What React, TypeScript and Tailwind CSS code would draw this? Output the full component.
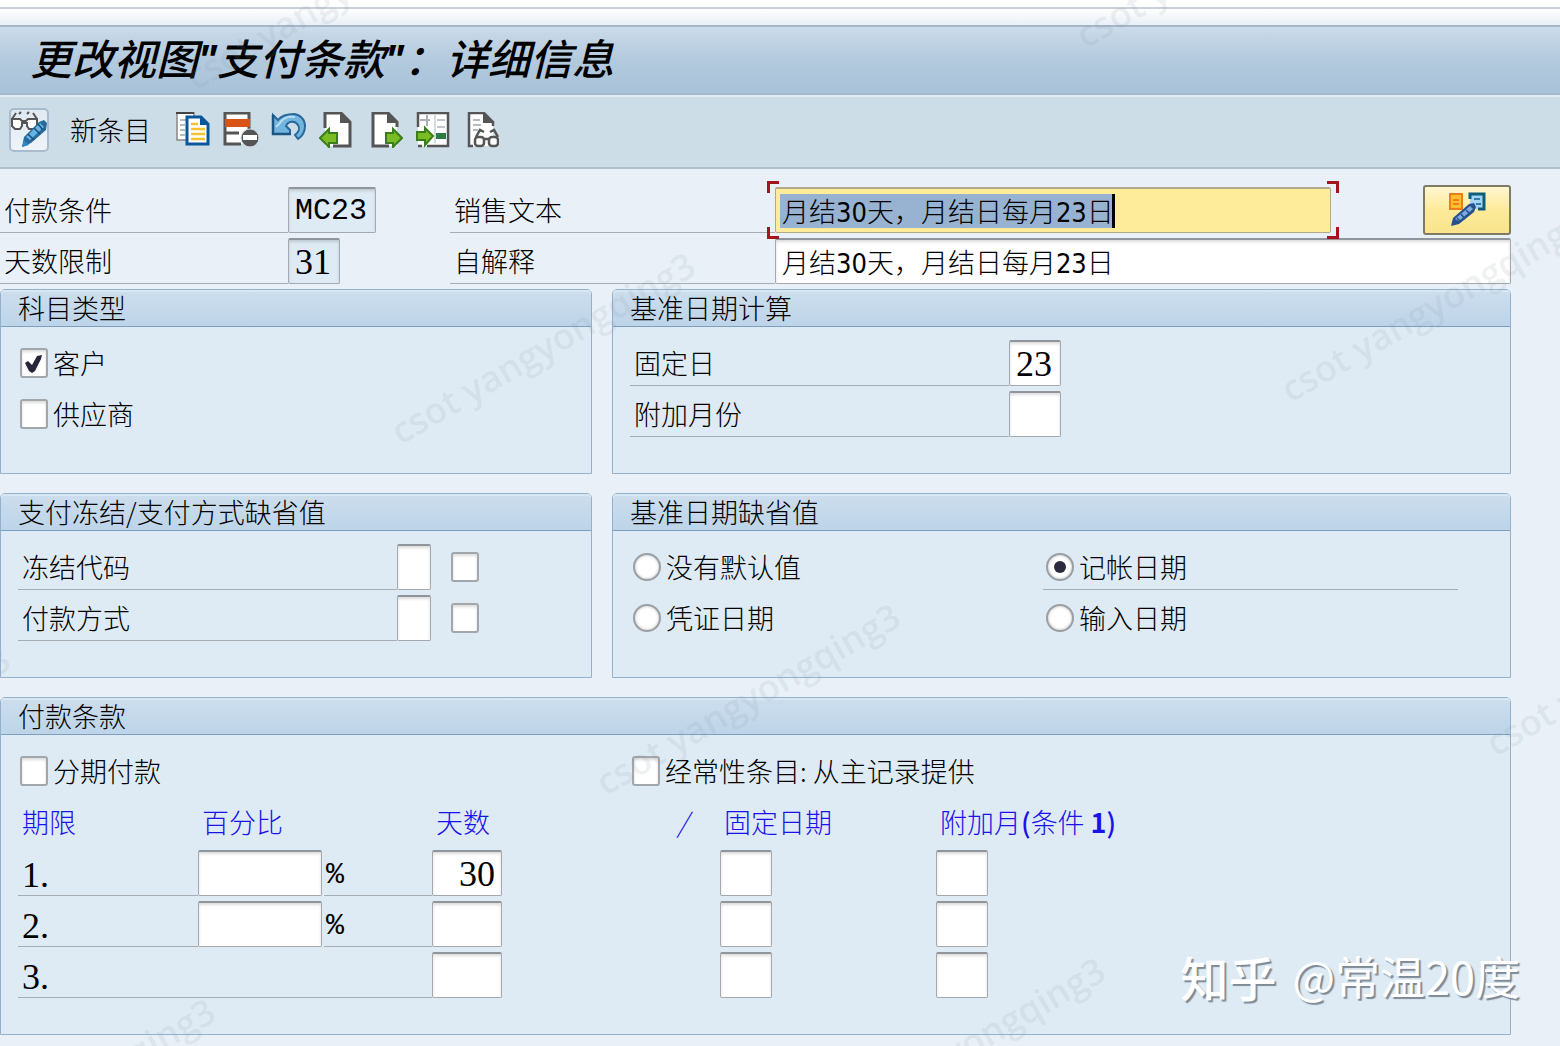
import React, { useState } from "react";

const MIXED = "font-['DejaVu_Sans_Condensed','Noto_Sans_CJK_SC',sans-serif]";
const CJK = "font-['Noto_Sans_CJK_SC',sans-serif]";

const FIELD =
  "block h-[46px] rounded-[2px] border border-[#a3a9ae] border-t-2 border-t-[#8f959b] bg-white text-black outline-none shadow-[inset_0_2px_3px_rgba(0,0,0,0.14)]";
const DIGITS = "font-['Liberation_Serif',serif] text-[36px] leading-[40px]";
const LABEL = "flex h-[46px] items-center border-b border-[#a6adb3] pl-1";

function CheckBox({ label, checked = false, text }: { label: string; checked?: boolean; text?: boolean }) {
  const [on, setOn] = useState(checked);
  return (
    <label className={text ? "flex h-[46px] items-center gap-[5px] pl-0.5" : "flex h-[46px] items-center"}>
      <span className="relative block h-[30px] w-7 shrink-0">
        <input
          type="checkbox"
          aria-label={label}
          checked={on}
          onChange={() => setOn(!on)}
          className="block h-[30px] w-7 appearance-none rounded-[3px] border-2 border-[#a2a7ac] bg-white shadow-[inset_0_2px_3px_rgba(0,0,0,0.14)]"
        />
        {on && (
          <svg viewBox="0 0 28 30" className="pointer-events-none absolute inset-0">
            <path d="M5 15l3-2 4 4L17 8l5-1-1 4-6 12-3 2-3-2z" fill="#26243a" />
          </svg>
        )}
      </span>
      {text && <span>{label}</span>}
    </label>
  );
}

function Radio({ label, value, current, onPick }: { label: string; value: string; current: string; onPick: (v: string) => void }) {
  return (
    <label className="flex h-[46px] items-center gap-[5px] pl-[3px]">
      <span className="relative block size-7 shrink-0">
        <input
          type="radio"
          name="baseline"
          checked={current === value}
          onChange={() => onPick(value)}
          className="block size-7 appearance-none rounded-full border-2 border-[#9a9fa4] bg-white shadow-[inset_0_0_3px_rgba(0,0,0,0.3)]"
        />
        {current === value && <span className="pointer-events-none absolute inset-2 rounded-full bg-[#2b2a40]" />}
      </span>
      <span>{label}</span>
    </label>
  );
}

function Panel({ title, children }: { title: string; children: React.ReactNode }) {
  return (
    <section className="rounded-t-[5px] border border-[#93b1cd] bg-[#deebf4]">
      <h2 className="flex h-[37px] items-center rounded-t-[4px] border-b border-[#7d9fbe] bg-linear-to-b from-[#cddeed] to-[#bdd4e9] pl-[17px] shadow-[inset_0_2px_0_#d9e7f3]">
        {title}
      </h2>
      <div className="flex flex-col gap-[5px] px-[17px] pt-[13px] pb-9">{children}</div>
    </section>
  );
}

const ICON = "size-9 shrink-0";

const DisplayChangeIcon = () => (
  <svg viewBox="0 0 36 40" className="h-10 w-9">
    <path d="M1 9h8l2 2h4l2-2h9v7l-3 3h-5l-2-3v-3h-5v3l-2 3H4l-3-3z" fill="#fff" stroke="#555" strokeWidth="2" />
    <path d="M1 9l4-6M26 9l-4-6M8 4l2-2M16 4l2-2" stroke="#555" strokeWidth="2" fill="none" />
    <path d="M11 37l2-10 15-15 5-2 3 3-1 7-15 13z" fill="#286a9b" />
    <path d="M15 27L29 13l4 4-14 13z" fill="#62b5e6" />
    <path d="M17 24l6 6M23 18l6 6M27 14l5 6" stroke="#1e4d75" strokeWidth="1.5" />
    <path d="M11 37l2-7 5 5z" fill="#2f86c4" />
  </svg>
);

const CopyIcon = () => (
  <svg viewBox="0 0 36 36" className={ICON}>
    <path d="M2 1h17v27H2z" fill="#fff" stroke="#888" strokeWidth="1.5" />
    <path d="M1 1h18" stroke="#444" strokeWidth="2" />
    <path d="M5 8h6M5 13h5M5 18h5M5 23h5" stroke="#b5bbc2" strokeWidth="2" />
    <path d="M12 5h14l7 7v20H12z" fill="#fff" stroke="#0a569b" strokeWidth="3" />
    <path d="M25 4l9 9h-9z" fill="#0a569b" />
    <path d="M16 12h7M16 17h14M16 22h14M16 27h14" stroke="#f5c231" strokeWidth="2.5" />
  </svg>
);

const DeleteIcon = () => (
  <svg viewBox="0 0 36 36" className={ICON}>
    <path d="M1 1h26v31H1z" fill="#fff" />
    <path d="M26 18V1H2v31h16" fill="none" stroke="#555" strokeWidth="3" />
    <path d="M2 7h25v8H2z" fill="#d95319" />
    <path d="M2 21h14" stroke="#555" strokeWidth="3" />
    <circle cx="27" cy="26" r="9" fill="#555" stroke="#cddde8" strokeWidth="1" />
    <path d="M20 23h14v5H20z" fill="#fff" />
  </svg>
);

const UndoIcon = () => (
  <svg viewBox="0 0 36 36" className={ICON}>
    <path
      d="M2 3l5 5C11 3 17 2 23 2c7 1 11 6 11 12 0 7-4 11-7 13l-3-4c4-3 5-7 3-10-3-5-10-4-12 1l4 4v4H2z"
      fill="#72b5df"
      stroke="#27679a"
      strokeWidth="2"
    />
    <path d="M5 15l4-4c3-5 9-7 15-6" stroke="#b9def4" strokeWidth="2" fill="none" />
    <path d="M2 3v19h18" stroke="#1d5583" strokeWidth="2.5" fill="none" />
  </svg>
);

const Arrow = ({ d }: { d: string }) => <path d={d} fill="#79bd22" stroke="#3b7d1b" strokeWidth="2" />;

const PreviousIcon = () => (
  <svg viewBox="0 0 36 36" className={ICON}>
    <path d="M6 1h16l9 9v24H6z" fill="#fff" />
    <path d="M6 16V1h16l9 9v24H14" fill="none" stroke="#555" strokeWidth="3" />
    <path d="M21 1v10h10z" fill="#555" />
    <Arrow d="M1 26l9-9v4h8v10h-8v4z" />
  </svg>
);

const NextIcon = () => (
  <svg viewBox="0 0 36 36" className={ICON}>
    <path d="M6 1h15l9 9v24H6z" fill="#fff" />
    <path d="M30 15v-5l-9-9H6v33h16" fill="none" stroke="#555" strokeWidth="3" />
    <path d="M20 1v10h10z" fill="#555" />
    <Arrow d="M35 26l-9-9v4h-7v10h7v4z" />
  </svg>
);

const PositionIcon = () => (
  <svg viewBox="0 0 36 36" className={ICON}>
    <path d="M3 1h30v33H3z" fill="#fff" />
    <path d="M3 15V1h30v33H12M3 34h4" fill="none" stroke="#555" strokeWidth="2.5" />
    <path d="M12 3v11M5 8h10" stroke="#aab1b8" strokeWidth="2" />
    <path d="M20 3v28" stroke="#d5dadf" strokeWidth="2" />
    <path d="M22 8h8M22 15h8" stroke="#c0c6cc" strokeWidth="2" />
    <path d="M21 21h10v6H21z" fill="#2b7d46" />
    <Arrow d="M18 24l-8-8v4H2v8h8v5z" />
  </svg>
);

const OtherViewIcon = () => (
  <svg viewBox="0 0 36 36" className={ICON}>
    <path d="M6 1h15l9 9v24H6z" fill="#fff" />
    <path d="M30 14v-4l-9-9H6v33h4" fill="none" stroke="#555" strokeWidth="2.5" />
    <path d="M20 1v10h10z" fill="#555" />
    <path d="M10 8h7M10 13h8M10 18h5" stroke="#b5bbc2" strokeWidth="2" />
    <path d="M12 24h24v9H12z" fill="#fff" />
    <path d="M13 25l4-7 4 2M35 25l-4-7-4 2" fill="none" stroke="#555" strokeWidth="2.5" />
    <rect x="12" y="25" width="9" height="9" rx="3" fill="#fff" stroke="#555" strokeWidth="2.5" />
    <rect x="26" y="25" width="9" height="9" rx="3" fill="#fff" stroke="#555" strokeWidth="2.5" />
    <path d="M21 27h5" stroke="#555" strokeWidth="2.5" />
  </svg>
);

const TranslateIcon = () => (
  <svg viewBox="0 0 38 36" className="h-9 w-[38px]">
    <path d="M2 2h12v15H2z" fill="#fbc02d" stroke="#ee7d1a" strokeWidth="2" />
    <path d="M5 8h6M5 12h6" stroke="#ee7d1a" strokeWidth="2" />
    <path d="M22 2h14v15H22z" fill="#a5d3f2" />
    <path d="M22 7V2h14v15h-6" fill="none" stroke="#0f5c7d" strokeWidth="3" />
    <path d="M26 7h6M28 12h5" stroke="#2f7ab0" strokeWidth="2" />
    <path d="M3 34l2-8 16-14 5-1 2 4-2 5-15 12z" fill="#27508f" />
    <path d="M7 27l15-13 3 3-14 12z" fill="#7eaae2" />
    <path d="M9 26l4 4M13 22l4 5M18 18l4 4" stroke="#27508f" strokeWidth="1.5" />
  </svg>
);

const TOOLS = [
  { name: "复制为", Icon: CopyIcon },
  { name: "删除", Icon: DeleteIcon },
  { name: "撤销更改", Icon: UndoIcon },
  { name: "上一条目", Icon: PreviousIcon },
  { name: "下一条目", Icon: NextIcon },
  { name: "定位", Icon: PositionIcon },
  { name: "其他视图", Icon: OtherViewIcon },
];

const STAMPS = [
  "left-[200px] top-[55px]",
  "left-[1090px] top-[13px]",
  "left-[405px] top-[409px]",
  "left-[1295px] top-[367px]",
  "left-[-280px] top-[803px]",
  "left-[610px] top-[760px]",
  "left-[1500px] top-[721px]",
  "left-[-75px] top-[1155px]",
  "left-[815px] top-[1114px]",
];

const ROWS = [
  { no: "1.", percent: true, days: "30" },
  { no: "2.", percent: true, days: "" },
  { no: "3.", percent: false, days: "" },
];

const TERM_TEXT = "月结30天，月结日每月23日";

export default function App() {
  const [baseline, setBaseline] = useState("posting");
  return (
    <div className={`relative min-h-screen overflow-hidden bg-[#e9f0f7] text-[27px] leading-9 font-light text-black ${CJK}`}>
      <div className="h-[9px] border-b-2 border-[#c8cfd6] bg-white" />
      <div className="h-[18px] border-b-2 border-[#a6b7c8] bg-linear-to-b from-white to-[#e8eff6]" />
      <header className="flex h-[68px] items-center border-b-2 border-[#a3b8cb] bg-linear-to-b from-[#cbdbe9] via-[#b3cade] to-[#a8c2d9] pl-[30px]">
        <h1 className="pb-1 text-[42px] leading-[48px] font-medium whitespace-pre text-black italic">
          更改视图<span className="font-['Noto_Sans'] font-bold">"</span>支付条款<span className="font-['Noto_Sans'] font-bold">"</span>：详细信息
        </h1>
      </header>
      <nav className="flex h-[74px] items-center border-t-2 border-b-2 border-t-[#e2ebf2] border-b-[#b1bfcb] bg-[#cddde8] pb-1 pl-[9px]">
        <button
          type="button"
          aria-label="显示/更改"
          className="flex h-11 w-10 items-center justify-center rounded-[5px] border-2 border-[#a9bccd] bg-linear-to-b from-[#dfe9f2] to-[#eef4f9]"
        >
          <DisplayChangeIcon />
        </button>
        <button type="button" className="ml-[21px] w-[105px] text-left">
          新条目
        </button>
        <div className="flex gap-3">
          {TOOLS.map(({ name, Icon }) => (
            <button key={name} type="button" aria-label={name}>
              <Icon />
            </button>
          ))}
        </div>
      </nav>

      <main className="mr-[49px] pt-[18px]">
        <div className="grid grid-cols-[288px_162px_325px_1fr] gap-y-[5px]">
          <label htmlFor="term" className={LABEL}>付款条件</label>
          <input
            id="term"
            readOnly
            defaultValue="MC23"
            className={`${FIELD} w-[88px] bg-[#dfebf4]! pl-1.5 font-['Liberation_Mono',monospace] text-[30px]`}
          />
          <label htmlFor="sales" className={LABEL}>销售文本</label>
          <div className="flex items-center justify-between">
            <div className="relative h-[46px] w-[556px]">
              <input
                id="sales"
                defaultValue={TERM_TEXT}
                className={`${MIXED} block h-[46px] w-full rounded-[2px] border border-t-2 border-[#b0a98a] bg-[#feec9b] bg-[linear-gradient(90deg,#98b3d1_332px,#000_332px,#000_335px,transparent_335px)] bg-[length:335px_34px] bg-[position:4px_5px] bg-no-repeat pl-1.5 text-[27px] text-black outline-none`}
              />
              <span className="pointer-events-none absolute -top-1.5 -left-2 size-3 border-t-3 border-l-3 border-[#a3141c]" />
              <span className="pointer-events-none absolute -top-1.5 -right-2 size-3 border-t-3 border-r-3 border-[#a3141c]" />
              <span className="pointer-events-none absolute -bottom-1.5 -left-2 size-3 border-b-3 border-l-3 border-[#a3141c]" />
              <span className="pointer-events-none absolute -right-2 -bottom-1.5 size-3 border-r-3 border-b-3 border-[#a3141c]" />
            </div>
            <button
              type="button"
              aria-label="翻译"
              className="-my-0.5 flex h-[50px] w-[88px] items-center justify-center rounded-[3px] border-2 border-[#7d7a66] bg-linear-to-b from-[#fff6cf] via-[#fdeb9a] to-[#f9e48c]"
            >
              <TranslateIcon />
            </button>
          </div>
          <label htmlFor="limit" className={LABEL}>天数限制</label>
          <input id="limit" readOnly defaultValue="31" className={`${FIELD} ${DIGITS} w-[52px] bg-[#dfebf4]! pl-1.5`} />
          <label htmlFor="own" className={LABEL}>自解释</label>
          <input id="own" defaultValue={TERM_TEXT} className={`${FIELD} ${MIXED} w-full pl-1.5 text-[27px]`} />
        </div>

        <div className="mt-[5px] grid grid-cols-[592px_1fr] gap-x-5 gap-y-[19px]">
          <Panel title="科目类型">
            <CheckBox label="客户" checked text />
            <CheckBox label="供应商" text />
          </Panel>
          <Panel title="基准日期计算">
            <div className="flex">
              <label htmlFor="fixed" className={`${LABEL} w-[379px]`}>固定日</label>
              <input id="fixed" defaultValue="23" className={`${FIELD} ${DIGITS} w-[52px] pl-1.5`} />
            </div>
            <div className="flex">
              <label htmlFor="addm" className={`${LABEL} w-[379px]`}>附加月份</label>
              <input id="addm" className={`${FIELD} ${DIGITS} w-[52px] pl-1.5`} />
            </div>
          </Panel>
          <Panel title="支付冻结/支付方式缺省值">
            {["冻结代码", "付款方式"].map((t) => (
              <div key={t} className="flex">
                <label htmlFor={t} className={`${LABEL} w-[379px]`}>{t}</label>
                <input id={t} className={`${FIELD} mr-5 w-[34px]`} />
                <CheckBox label={`${t}缺省`} />
              </div>
            ))}
          </Panel>
          <Panel title="基准日期缺省值">
            <div className="grid grid-cols-[413px_415px] gap-y-[5px]">
              <Radio label="没有默认值" value="none" current={baseline} onPick={setBaseline} />
              <div className="h-[46px] border-b border-[#a6adb3]">
                <Radio label="记帐日期" value="posting" current={baseline} onPick={setBaseline} />
              </div>
              <Radio label="凭证日期" value="document" current={baseline} onPick={setBaseline} />
              <Radio label="输入日期" value="entry" current={baseline} onPick={setBaseline} />
            </div>
          </Panel>
          <div className="col-span-2">
            <Panel title="付款条款">
              <div className="grid grid-cols-[612px_1fr]">
                <CheckBox label="分期付款" text />
                <CheckBox label="经常性条目: 从主记录提供" text />
              </div>
              <table className="-mb-[5px] w-full table-fixed">
                <colgroup>
                  <col className="w-[180px]" />
                  <col className="w-[126px]" />
                  <col className="w-[108px]" />
                  <col className="w-[70px]" />
                  <col className="w-[218px]" />
                  <col className="w-[216px]" />
                  <col />
                </colgroup>
                <thead>
                  <tr className="h-[51px] text-left text-[#1a12e8]">
                    <th scope="col" className="pb-[5px] pl-1 font-light">期限</th>
                    <th scope="col" colSpan={2} className="pb-[5px] pl-1 font-light">百分比</th>
                    <th scope="col" className="pb-[5px] pl-1 font-light">天数</th>
                    <th scope="col" className="pr-8 pb-[5px] text-right font-light italic">/</th>
                    <th scope="col" className="pb-[5px] pl-1 font-light">固定日期</th>
                    <th scope="col" className="pb-[5px] pl-1 font-light">
                      附加月<span className="font-medium">(</span>条件 <span className="font-bold">1</span><span className="font-medium">)</span>
                    </th>
                  </tr>
                </thead>
                <tbody>
                  {ROWS.map((r) => (
                    <tr key={r.no}>
                      <td colSpan={r.percent ? 1 : 3} className="p-0 pb-[5px]">
                        <div className={`${LABEL} ${DIGITS} pt-1`}>{r.no}</div>
                      </td>
                      {r.percent && (
                        <>
                          <td className="p-0 pb-[5px]">
                            <input aria-label={`百分比 ${r.no}`} className={`${FIELD} ${DIGITS} w-[124px] px-1.5 text-right`} />
                          </td>
                          <td className="p-0 pb-[5px]">
                            <div className="flex h-[46px] items-center border-b border-[#a6adb3] pt-1 pl-0.5 font-['Liberation_Mono',monospace] text-[30px]">%</div>
                          </td>
                        </>
                      )}
                      <td className="p-0 pb-[5px]">
                        <input aria-label={`天数 ${r.no}`} defaultValue={r.days} className={`${FIELD} ${DIGITS} w-[70px] px-1.5 text-right`} />
                      </td>
                      <td />
                      <td className="p-0 pb-[5px]">
                        <input aria-label={`固定日期 ${r.no}`} className={`${FIELD} ${DIGITS} w-[52px] px-1.5`} />
                      </td>
                      <td className="p-0 pb-[5px]">
                        <input aria-label={`附加月 ${r.no}`} className={`${FIELD} ${DIGITS} w-[52px] px-1.5`} />
                      </td>
                    </tr>
                  ))}
                </tbody>
              </table>
            </Panel>
          </div>
        </div>
      </main>

      {STAMPS.map((place) => (
        <span
          key={place}
          className={`pointer-events-none absolute origin-bottom-left -rotate-30 font-['Open_Sans',sans-serif] text-[36px] leading-[44px] font-semibold whitespace-nowrap text-[#8796a5]/15 ${place}`}
        >
          csot yangyongqing3
        </span>
      ))}
      <div className="pointer-events-none absolute right-10 bottom-10 flex items-center gap-4 text-[45px] leading-[60px] font-normal whitespace-nowrap text-white [text-shadow:2px_2px_1px_#7d8a96]">
        <span className="text-[48px] font-medium">知乎</span>
        <span>@常温20度</span>
      </div>
    </div>
  );
}
